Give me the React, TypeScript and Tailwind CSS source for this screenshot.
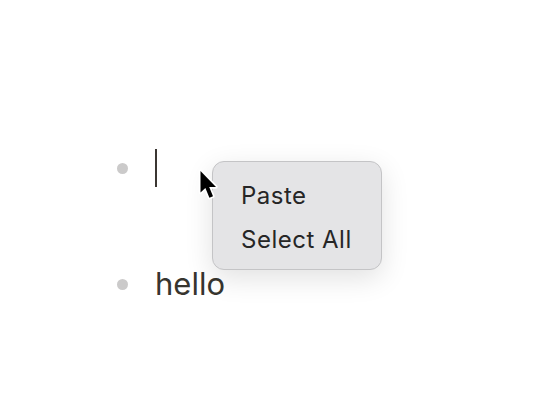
import React from "react";

function Bullet() {
  return <span className="block size-[11px] shrink-0 rounded-full bg-[#cbcaca]" />;
}

const arrow = "M6.5 8 L6.5 29.5 L11.4 25 L15.4 34.8 L19 33.3 L15.2 24 L22 24 Z";

function Pointer() {
  // macOS-style arrow cursor: white outline under a black body
  return (
    <svg
      className="absolute left-[194px] top-[163px]"
      width="28"
      height="40"
      viewBox="0 0 28 40"
    >
      <path d={arrow} fill="#fff" stroke="#fff" strokeWidth="3.4" strokeLinejoin="round" />
      <path d={arrow} fill="#000" />
    </svg>
  );
}

export default function App() {
  return (
    <div className="relative h-[416px] w-[558px] overflow-hidden bg-white font-[Inter,'Noto_Sans',sans-serif] text-[#37352f]">
      <ul className="pl-[117px] pt-[149px]">
        <li className="flex h-[38px] items-center gap-[27px]">
          <Bullet />
          <span className="block h-[38px] w-[2px] bg-[#3b3632]" />
        </li>
        <li className="mt-[77px] flex h-[40px] items-center gap-[27px]">
          <Bullet />
          <span className="text-[31px] leading-[40px]">hello</span>
        </li>
      </ul>

      <div className="absolute left-[212px] top-[161px] flex h-[109px] w-[170px] flex-col rounded-[12px] border border-[#c4c4c6] bg-[#e4e4e6] pl-[28px] pt-[12px] text-[24px] leading-[44px] tracking-[0.5px] text-[#262626] shadow-[0_8px_28px_rgba(0,0,0,0.12)]">
        <span>Paste</span>
        <span>Select All</span>
      </div>

      <Pointer />
    </div>
  );
}
